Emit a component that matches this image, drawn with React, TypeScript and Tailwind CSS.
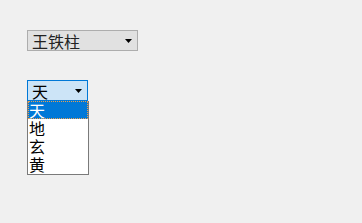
import { useState } from 'react';

const font = { fontFamily: '"Noto Sans CJK SC", "Noto Sans", sans-serif' };

function Arrow() {
  return (
    <svg width="7" height="4" viewBox="0 0 7 4" className="flex-shrink-0">
      <path d="M0 0H7L3.5 4Z" fill="#000" />
    </svg>
  );
}

export default function App() {
  const [name] = useState('王铁柱');
  const options = ['天', '地', '玄', '黄'];
  const selected = 0;

  return (
    <div
      className="min-h-screen w-full bg-[#f0f0f0] pl-[27px] pt-[30px] flex flex-col items-start text-[16px] leading-[18px] text-black"
      style={font}
    >
      {/* closed select */}
      <div className="w-[111px] h-[21px] border border-[#adadad] bg-[#e1e1e1] flex items-center pl-[4px] pr-[5px]">
        <span className="flex-1 text-[#222]">{name}</span>
        <Arrow />
      </div>

      {/* open select */}
      <div className="relative mt-[29px]">
        <div className="w-[61px] h-[21px] border border-[#0078d7] bg-[#cce4f7] flex items-center pl-[4px] pr-[5px]">
          <span className="flex-1">{options[selected]}</span>
          <Arrow />
        </div>
        <div className="absolute left-0 top-full w-[62px] border border-t-0 border-[#7a7a7a] bg-white flex flex-col pb-[1px]">
          {options.map((o, i) => (
            <div
              key={o}
              className={`h-[18px] pl-[1px] flex items-center ${
                i === selected ? 'bg-[#0078d7] text-white outline-1 outline-dotted outline-[#e8a050] -outline-offset-1' : ''
              }`}
            >
              {o}
            </div>
          ))}
        </div>
      </div>
    </div>
  );
}
